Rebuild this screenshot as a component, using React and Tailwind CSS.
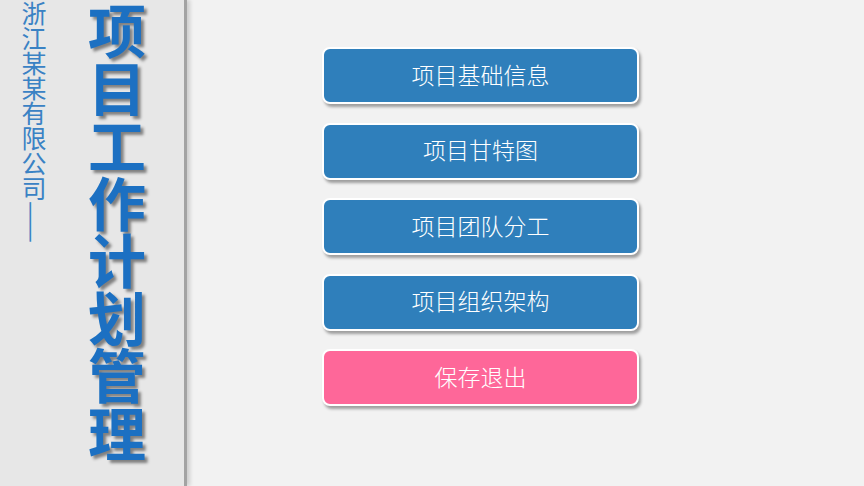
import React from 'react';

const menuItems = [
  { label: '项目基础信息', color: 'bg-[#2f7fbb]' },
  { label: '项目甘特图', color: 'bg-[#2f7fbb]' },
  { label: '项目团队分工', color: 'bg-[#2f7fbb]' },
  { label: '项目组织架构', color: 'bg-[#2f7fbb]' },
  { label: '保存退出', color: 'bg-[#fe6799]' },
];

const App = () => {
  return (
    <div
      className="w-[864px] h-[486px] flex bg-[#f2f2f2] overflow-hidden"
      style={{ fontFamily: '"Noto Sans CJK SC", "Noto Sans", sans-serif' }}
    >
      {/* Left title panel */}
      <div className="w-[187px] h-full shrink-0 bg-[#e7e7e7] flex border-r-[3px] border-[#a3a3a3] shadow-[3px_0_4px_rgba(0,0,0,0.15)]">
        <div className="w-[70px] pl-[21px] pt-[1px]">
          <div className="[writing-mode:vertical-rl] text-[25px] leading-[26px] text-[#3a82c4] font-normal">
            浙江某某有限公司——
          </div>
        </div>
        <div className="flex-1 pt-[2px] pl-[18px]">
          <div className="[writing-mode:vertical-rl] text-[58px] leading-[58px] font-bold text-[#1c70c2] tracking-[-0.5px] [text-shadow:3px_3px_3px_rgba(0,0,0,0.45)]">
            项目工作计划管理
          </div>
        </div>
      </div>

      {/* Menu buttons */}
      <div className="flex-1 flex flex-col pt-[47px] pl-[135px] gap-[18.5px]">
        {menuItems.map((item) => (
          <button
            key={item.label}
            className={`w-[317px] h-[57px] ${item.color} rounded-[8px] border-2 border-white text-white text-[23px] font-light flex items-center justify-center pb-[3px] shadow-[2px_3px_3px_rgba(0,0,0,0.35)]`}
          >
            {item.label}
          </button>
        ))}
      </div>
    </div>
  );
};

export default App;
